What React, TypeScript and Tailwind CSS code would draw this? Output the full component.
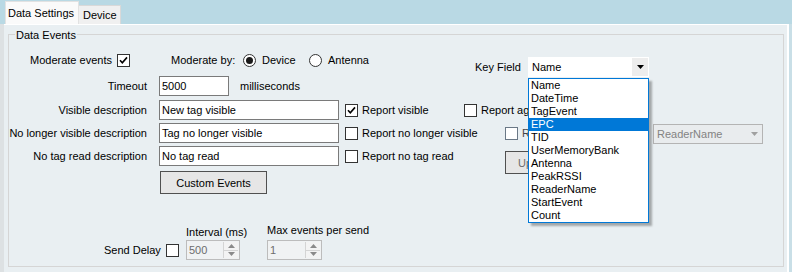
import React from 'react';

const font = "font-['Liberation_Sans',Arial,sans-serif] text-[11px] leading-[14px] text-black";

const Check = ({ checked = false, disabled = false }: { checked?: boolean; disabled?: boolean }) => (
  <span
    className={`w-[13px] h-[13px] shrink-0 border bg-white flex items-center justify-center ${
      disabled ? 'border-[#6a7886]' : 'border-[#333333]'
    }`}
  >
    {checked && (
      <svg width="11" height="11" viewBox="0 0 11 11">
        <path d="M2 5.2 L4.3 7.8 L9 2.4" fill="none" stroke="#000" strokeWidth="1.6" />
      </svg>
    )}
  </span>
);

const Radio = ({ on = false }: { on?: boolean }) => (
  <span className="w-[13px] h-[13px] shrink-0 rounded-full border border-[#333333] bg-white flex items-center justify-center">
    {on && <span className="w-[7px] h-[7px] rounded-full bg-[#1a1a1a]" />}
  </span>
);

const TextBox = ({ value, width }: { value: string; width: string }) => (
  <div className={`${width} h-[20px] shrink-0 border border-[#7a7a7a] bg-white pl-[2px] flex items-center whitespace-nowrap`}>
    {value}
  </div>
);

const Arrow = ({ color }: { color: string }) => (
  <svg width="7" height="4" viewBox="0 0 7 4">
    <path d="M0 0 H7 L3.5 4 Z" fill={color} />
  </svg>
);

const Spin = ({ value, width }: { value: string; width: string }) => (
  <div className={`${width} h-[20px] shrink-0 border border-[#bcbcbc] bg-[#f0f2f3] flex`}>
    <div className="flex-1 pl-[2px] flex items-center text-[#6d6d6d]">{value}</div>
    <div className="w-[15px] flex flex-col border-l border-[#d4d4d4] my-[1px] mr-[1px]">
      <div className="flex-1 flex items-center justify-center border-b border-[#d4d4d4] bg-[#f3f3f3]">
        <svg width="7" height="4" viewBox="0 0 7 4">
          <path d="M0 4 H7 L3.5 0 Z" fill="#8a8a8a" />
        </svg>
      </div>
      <div className="flex-1 flex items-center justify-center bg-[#f3f3f3]">
        <Arrow color="#8a8a8a" />
      </div>
    </div>
  </div>
);

const keyFields = [
  'Name',
  'DateTime',
  'TagEvent',
  'EPC',
  'TID',
  'UserMemoryBank',
  'Antenna',
  'PeakRSSI',
  'ReaderName',
  'StartEvent',
  'Count',
];

export default function App() {
  return (
    <div className={`${font} w-[792px] h-[272px] overflow-hidden bg-[#b9d9e4] flex flex-col`}>
      {/* Tab strip */}
      <div className="h-[24px] flex items-end pl-[5px] shrink-0">
        <div className="w-[74px] h-[23px] bg-[#fafafa] border border-b-0 border-[#e2e2e2] pl-[2px] pt-[4px]">
          Data Settings
        </div>
        <div className="w-[42px] h-[19px] bg-[#f0f0f0] border border-l-0 border-b-0 border-[#d9d9d9] pl-[4px] pt-[2px]">
          Device
        </div>
      </div>

      <div className="flex flex-1">
        <div className="w-[4px] bg-[#dde1e3]" />
        {/* Tab page */}
        <div className="w-[785px] bg-[#e9eff2] border-t border-r-2 border-white pl-[4px] pt-[9px]">
          {/* Group box */}
          <div className="relative w-[776px] h-[233px] border border-[#d5d5d5]">
            <span className="absolute -top-[7px] left-[6px] px-[1px] bg-[#e9eff2]">Data Events</span>

            {/* Row 1 */}
            <div className="mt-[17px] h-[16px] flex items-center">
              <span className="ml-[21px] w-[87px] shrink-0 whitespace-nowrap">Moderate events</span>
              <Check checked />
              <span className="ml-[41px] w-[72px] shrink-0 whitespace-nowrap">Moderate by:</span>
              <Radio on />
              <span className="ml-[6px] w-[47px] shrink-0">Device</span>
              <Radio />
              <span className="ml-[6px] w-[147px] shrink-0">Antenna</span>
              <span className="w-[53px] shrink-0 self-start mt-[8px] whitespace-nowrap">Key Field</span>
              <div className="relative self-start mt-[5px] w-[121px] h-[20px] shrink-0 bg-white flex">
                <div className="flex-1 pl-[4px] flex items-center">Name</div>
                <div className="w-[16px] my-[1px] mr-[1px] bg-[#ededed] flex items-center justify-center">
                  <Arrow color="#000" />
                </div>

                {/* Open drop-down list */}
                <div className="absolute left-0 top-[21px] z-10 w-[121px] border border-[#0078d7] bg-white shadow-[3px_3px_2px_rgba(0,0,0,0.3)]">
                  {keyFields.map((f) => (
                    <div
                      key={f}
                      className={`h-[13px] leading-[13px] pl-[2px] whitespace-nowrap ${
                        f === 'EPC' ? 'bg-[#0078d7] text-white' : ''
                      }`}
                    >
                      {f}
                    </div>
                  ))}
                </div>
              </div>
            </div>

            {/* Timeout */}
            <div className="mt-[8px] h-[20px] flex items-center">
              <span className="w-[138px] shrink-0 text-right">Timeout</span>
              <span className="ml-[12px]" />
              <TextBox value="5000" width="w-[70px]" />
              <span className="ml-[11px]">milliseconds</span>
            </div>

            {/* Visible */}
            <div className="mt-[4px] h-[20px] flex items-center">
              <span className="w-[138px] shrink-0 text-right whitespace-nowrap">Visible description</span>
              <span className="ml-[12px]" />
              <TextBox value="New tag visible" width="w-[180px]" />
              <span className="ml-[6px]" />
              <Check checked />
              <span className="ml-[4px] w-[102px] shrink-0 whitespace-nowrap">Report visible</span>
              <Check />
              <span className="ml-[4px] whitespace-nowrap">Report aged out</span>
            </div>

            {/* No longer visible */}
            <div className="mt-[3px] h-[20px] flex items-center">
              <span className="w-[138px] shrink-0 text-right whitespace-nowrap">No longer visible description</span>
              <span className="ml-[12px]" />
              <TextBox value="Tag no longer visible" width="w-[180px]" />
              <span className="ml-[6px]" />
              <Check />
              <span className="ml-[4px] w-[143px] shrink-0 whitespace-nowrap">Report no longer visible</span>
              <Check disabled />
              <span className="ml-[4px] w-[131px] shrink-0 whitespace-nowrap text-[#444]">Report reader name</span>
              <div className="self-start mt-[1px] w-[110px] h-[20px] shrink-0 border border-[#b4b4b4] bg-[#e9ecee] flex">
                <div className="flex-1 pl-[3px] flex items-center text-[#838383]">ReaderName</div>
                <div className="w-[16px] flex items-center justify-center">
                  <Arrow color="#a0a0a0" />
                </div>
              </div>
            </div>

            {/* No tag read */}
            <div className="mt-[3px] h-[20px] flex items-center">
              <span className="w-[138px] shrink-0 text-right whitespace-nowrap">No tag read description</span>
              <span className="ml-[12px]" />
              <TextBox value="No tag read" width="w-[180px]" />
              <span className="ml-[6px]" />
              <Check />
              <span className="ml-[4px] w-[143px] shrink-0 whitespace-nowrap">Report no tag read</span>
              <button className="self-start mt-[5px] w-[75px] h-[23px] shrink-0 border border-[#505050] bg-[#e6e6e6] text-[#6d6d6d] text-left pl-[12px]">
                Update
              </button>
            </div>

            {/* Custom events */}
            <div className="mt-[5px] flex">
              <button className="ml-[151px] w-[107px] h-[23px] border border-[#505050] bg-[#e6e6e6]">
                Custom Events
              </button>
            </div>

            {/* Send delay labels */}
            <div className="mt-[29px] h-[14px] flex items-start">
              <span className="ml-[177px] mt-[2px] w-[81px] shrink-0 whitespace-nowrap">Interval (ms)</span>
              <span className="whitespace-nowrap">Max events per send</span>
            </div>

            {/* Send delay */}
            <div className="mt-[3px] h-[20px] flex items-center">
              <span className="ml-[95px] w-[62px] shrink-0 whitespace-nowrap">Send Delay</span>
              <Check />
              <span className="ml-[7px]" />
              <Spin value="500" width="w-[54px]" />
              <span className="ml-[27px]" />
              <Spin value="1" width="w-[55px]" />
            </div>
          </div>
        </div>
        <div className="flex-1 bg-[#c9dfe7]" />
      </div>
    </div>
  );
}
